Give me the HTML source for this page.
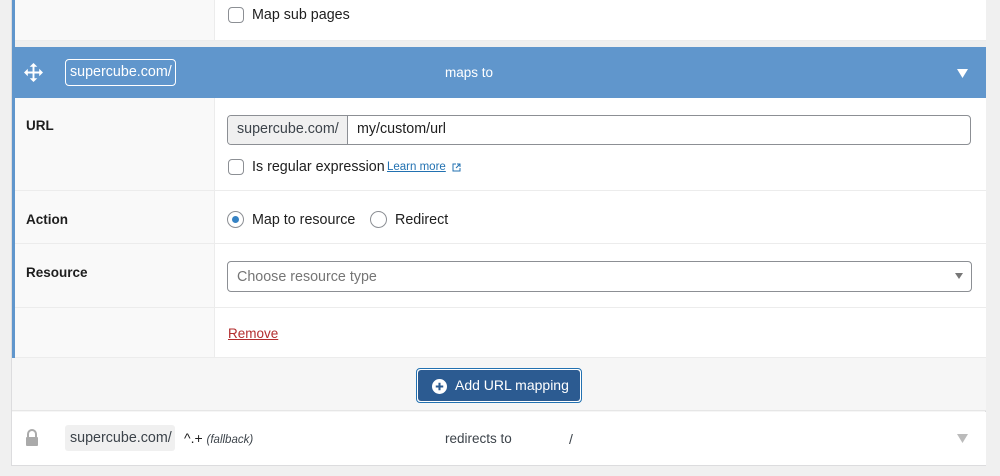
<!DOCTYPE html>
<html><head><style>
*{box-sizing:border-box;margin:0;padding:0}
body{width:1000px;height:476px;background:#f0f0f0;font-family:"Liberation Sans",sans-serif;font-size:14px;color:#1e1e1e;position:relative;overflow:hidden}
.a{position:absolute}
.cb{position:absolute;width:16px;height:16px;border:1px solid #8c8f94;border-radius:4px;background:#fff}
.lbl{font-weight:bold;font-size:13.5px}
.row{position:absolute;left:15px;width:971px;border-bottom:1px solid #ececec}
.lc{position:absolute;left:0;top:0;bottom:0;width:200px;background:#f9f9f9;border-right:1px solid #ececec}
.rc{position:absolute;left:200px;right:0;top:0;bottom:0;background:#fff}
</style></head><body>
<div class="a" style="left:11px;top:0;width:975px;height:466px;background:#f6f6f6;border:1px solid #dcdcde;border-top:none"></div>
<div class="a" style="left:12px;top:0;width:3px;height:358px;background:#6096cc"></div>
<div class="row" style="top:0;height:41px"><div class="lc"></div><div class="rc"></div></div>
<div class="cb" style="left:228px;top:7px"></div>
<div class="a" style="left:252px;top:7px;font-size:14.3px">Map sub pages</div>
<div class="a" style="left:15px;top:41px;width:971px;height:6px;background:#efefef"></div>
<div class="a" style="left:13px;top:47px;width:973px;height:51px;background:#6096cc"></div>
<svg class="a" style="left:24px;top:63px" width="19" height="19" viewBox="0 0 20 20"><path fill="#fff" d="M10 0l4 4h-3v5h5V6l4 4-4 4v-3h-5v5h3l-4 4-4-4h3v-5H4v3l-4-4 4-4v3h5V4H6z"/></svg>
<div class="a" style="left:65px;top:59px;width:111px;height:27px;border:1px solid #fff;border-radius:4px;color:#fff;font-size:14.3px;padding:4px 0 0 4px">supercube.com/</div>
<div class="a" style="left:445px;top:65px;color:#fff;font-size:13.5px">maps to</div>
<svg class="a" style="left:957px;top:69px" width="11" height="9"><path d="M0 0h11L5.5 9z" fill="#fff"/></svg>
<div class="row" style="top:98px;height:93px"><div class="lc"></div><div class="rc"></div></div>
<div class="a lbl" style="left:26px;top:118px">URL</div>
<div class="a" style="left:227px;top:115px;width:744px;height:30px;border:1px solid #8c8f94;border-radius:4px;background:#fff"></div>
<div class="a" style="left:228px;top:116px;width:120px;height:28px;background:#f0f0f0;border-right:1px solid #8c8f94;border-radius:3px 0 0 3px;color:#3c434a;padding:5px 0 0 9px;font-size:14.3px">supercube.com/</div>
<div class="a" style="left:357px;top:121px;font-size:14.3px">my/custom/url</div>
<div class="cb" style="left:228px;top:159px"></div>
<div class="a" style="left:252px;top:159px;font-size:14.3px">Is regular expression</div>
<div class="a" style="left:387px;top:160px;color:#2271b1;font-size:11.5px;text-decoration:underline;line-height:14px">Learn more</div>
<svg class="a" style="left:452px;top:163px" width="9" height="9" viewBox="0 0 9 9"><path d="M4 1H1v7h7V5M5 1h3v3M8 1L4 5" fill="none" stroke="#2271b1" stroke-width="1"/></svg>
<div class="row" style="top:191px;height:53px"><div class="lc"></div><div class="rc"></div></div>
<div class="a lbl" style="left:26px;top:212px">Action</div>
<div class="a" style="left:227px;top:211px;width:17px;height:17px;border:1px solid #8c8f94;border-radius:50%;background:#fff"></div>
<div class="a" style="left:232px;top:216px;width:7px;height:7px;border-radius:50%;background:#3582c4"></div>
<div class="a" style="left:252px;top:212px;font-size:14.3px">Map to resource</div>
<div class="a" style="left:370px;top:211px;width:17px;height:17px;border:1px solid #8c8f94;border-radius:50%;background:#fff"></div>
<div class="a" style="left:395px;top:212px;font-size:14.3px">Redirect</div>
<div class="row" style="top:244px;height:64px"><div class="lc"></div><div class="rc"></div></div>
<div class="a lbl" style="left:26px;top:265px">Resource</div>
<div class="a" style="left:227px;top:261px;width:745px;height:31px;border:1px solid #8c8f94;border-radius:4px;background:#fff;color:#757575;padding:7px 0 0 9px;font-size:14.3px">Choose resource type</div>
<svg class="a" style="left:955px;top:273px" width="8" height="6"><path d="M0 0h8L4 6z" fill="#777"/></svg>
<div class="row" style="top:308px;height:50px"><div class="lc"></div><div class="rc"></div></div>
<div class="a" style="left:228px;top:326px;color:#b32d2e;text-decoration:underline;font-size:13.5px">Remove</div>
<div class="a" style="left:12px;top:358px;width:974px;height:53px;background:#f6f6f6;border-bottom:1px solid #e6e6e6"></div>
<div class="a" style="left:416px;top:368px;width:166px;height:35px;border:1px solid #2271b1;border-radius:4px;background:#fff;padding:1px">
<div style="width:100%;height:100%;background:#2c5b91;border-radius:3px;color:#fff;font-size:14px;padding:7px 0 0 37px;position:relative">Add URL mapping
<svg style="position:absolute;left:14px;top:9px" width="15" height="15" viewBox="0 0 16 16"><circle cx="8" cy="8" r="8" fill="#fff"/><path d="M8 4v8M4 8h8" stroke="#2c5b91" stroke-width="2.2"/></svg></div></div>
<div class="a" style="left:12px;top:412px;width:974px;height:53px;background:#fff"></div>
<svg class="a" style="left:25px;top:429px" width="14" height="17" viewBox="0 0 14 17"><path d="M3 8V5a4 4 0 0 1 8 0v3" fill="none" stroke="#aaa" stroke-width="2"/><rect x="1" y="8" width="12" height="9" rx="1" fill="#aaa"/></svg>
<div class="a" style="left:65px;top:425px;width:110px;height:26px;background:#f0f0f0;border-radius:3px;color:#3c434a;padding:5px 0 0 5px;font-size:14.3px">supercube.com/</div>
<div class="a" style="left:184px;top:430px;font-size:14px">^.+ <i style="font-size:11.5px;color:#3c434a">(fallback)</i></div>
<div class="a" style="left:445px;top:431px;color:#3c434a;font-size:13.5px">redirects to</div>
<div class="a" style="left:569px;top:431px;color:#3c434a">/</div>
<svg class="a" style="left:957px;top:434px" width="11" height="9"><path d="M0 0h11L5.5 9z" fill="#bbb"/></svg>
</body></html>
